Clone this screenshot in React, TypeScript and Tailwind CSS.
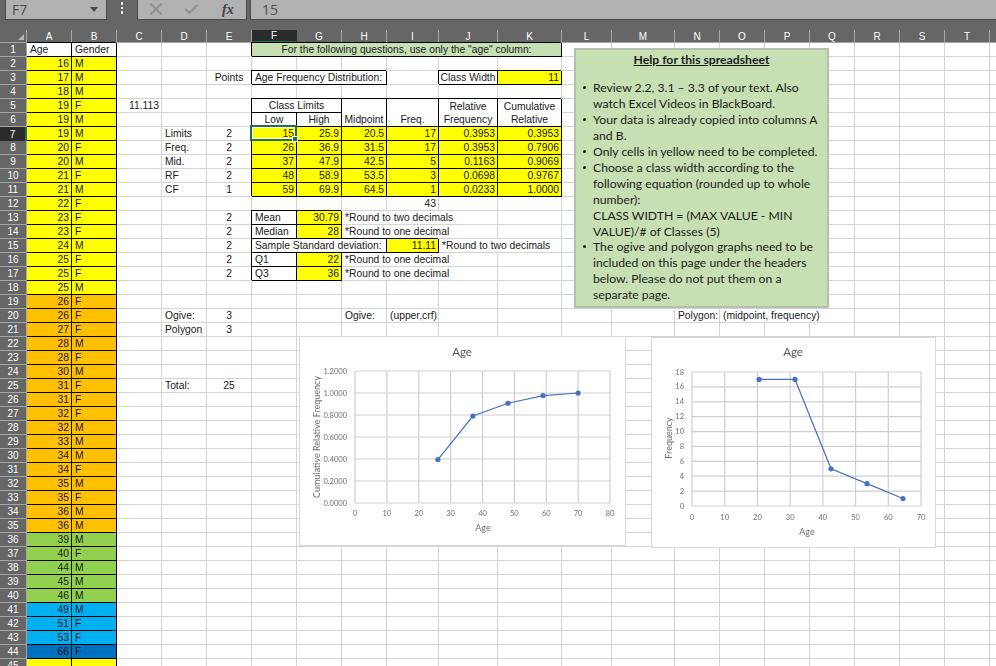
import { Check, X } from "lucide-react";

const COLS = ["A", "B", "C", "D", "E", "F", "G", "H", "I", "J", "K", "L", "M", "N", "O", "P", "Q", "R", "S", "T", "U"];
const ROW_COUNT = 45;

const ages: [number, string][] = [
  [16, "M"], [17, "M"], [18, "M"], [19, "F"], [19, "M"], [19, "M"], [20, "F"], [20, "M"], [21, "F"], [21, "M"],
  [22, "F"], [23, "F"], [23, "F"], [24, "M"], [25, "F"], [25, "F"], [25, "M"], [26, "F"], [26, "F"], [27, "F"],
  [28, "M"], [28, "F"], [30, "M"], [31, "F"], [31, "F"], [32, "F"], [32, "M"], [33, "M"], [34, "M"], [34, "F"],
  [35, "M"], [35, "F"], [36, "M"], [36, "M"], [39, "M"], [40, "F"], [44, "M"], [45, "M"], [46, "M"], [49, "M"],
  [51, "F"], [53, "F"], [66, "F"],
];

type Cell = {
  t?: React.ReactNode;
  align?: "l" | "r" | "c";
  bg?: string;
  box?: boolean;
  cols?: number;
  rows?: number;
  bottom?: boolean;
};

const colSpan: Record<number, string> = { 2: "col-span-2", 3: "col-span-3", 6: "col-span-6" };
const alignCls = { l: "justify-start pl-[3px]", r: "justify-end pr-[2px]", c: "justify-center" };

const YEL = "bg-[#ffff00]";
const cells: Record<string, Cell> = {
  A1: { t: "Age", box: true },
  B1: { t: "Gender", box: true },
  F1: { t: 'For the following questions, use only the "age" column:', cols: 6, align: "c", bg: "bg-[#c6e0b4]", box: true },
  E3: { t: "Points", align: "c" },
  F3: { t: "Age Frequency Distribution:", cols: 3, box: true },
  J3: { t: "Class Width", box: true, align: "c" },
  K3: { t: 11, box: true, align: "r", bg: YEL },
  C5: { t: "11.113", align: "r" },
  F5: { t: "Class Limits", cols: 2, box: true, align: "c" },
  H5: { t: "Midpoint", rows: 2, box: true, align: "c", bottom: true },
  I5: { t: "Freq.", rows: 2, box: true, align: "c", bottom: true },
  J5: { t: <div className="text-center">Relative<br />Frequency</div>, rows: 2, box: true, align: "c" },
  K5: { t: <div className="text-center">Cumulative<br />Relative</div>, rows: 2, box: true, align: "c" },
  F6: { t: "Low", box: true, align: "c" },
  G6: { t: "High", box: true, align: "c" },
  D7: { t: "Limits" }, E7: { t: 2, align: "c" },
  D8: { t: "Freq." }, E8: { t: 2, align: "c" },
  D9: { t: "Mid." }, E9: { t: 2, align: "c" },
  D10: { t: "RF" }, E10: { t: 2, align: "c" },
  D11: { t: "CF" }, E11: { t: 1, align: "c" },
  I12: { t: 43, align: "r" },
  E13: { t: 2, align: "c" },
  F13: { t: "Mean", box: true },
  G13: { t: "30.79", box: true, align: "r", bg: YEL },
  H13: { t: "*Round to two decimals", cols: 3 },
  E14: { t: 2, align: "c" },
  F14: { t: "Median", box: true },
  G14: { t: 28, box: true, align: "r", bg: YEL },
  H14: { t: "*Round to one decimal", cols: 3 },
  E15: { t: 2, align: "c" },
  F15: { t: "Sample Standard deviation:", cols: 3, box: true },
  I15: { t: "11.11", box: true, align: "r", bg: YEL },
  J15: { t: "*Round to two decimals", cols: 2 },
  E16: { t: 2, align: "c" },
  F16: { t: "Q1", box: true },
  G16: { t: 22, box: true, align: "r", bg: YEL },
  H16: { t: "*Round to one decimal", cols: 3 },
  E17: { t: 2, align: "c" },
  F17: { t: "Q3", box: true },
  G17: { t: 36, box: true, align: "r", bg: YEL },
  H17: { t: "*Round to one decimal", cols: 3 },
  D20: { t: "Ogive:" }, E20: { t: 3, align: "c" },
  H20: { t: "Ogive:" },
  I20: { t: "(upper,crf)" },
  N20: { t: "Polygon:" },
  O20: { t: "(midpoint, frequency)", cols: 3 },
  D21: { t: "Polygon" }, E21: { t: 3, align: "c" },
  D25: { t: "Total:" }, E25: { t: 25, align: "c" },
  A45: { box: true, bg: YEL },
  B45: { box: true, bg: YEL },
};

function ageColor(row: number) {
  if (row <= 18) return "bg-[#ffff00]";
  if (row <= 35) return "bg-[#ffc000]";
  if (row <= 40) return "bg-[#92d050]";
  if (row <= 43) return "bg-[#00b0f0]";
  return "bg-[#0070c0]";
}

ages.forEach(([age, sex], i) => {
  const row = i + 2;
  cells[`A${row}`] = { t: age, align: "r", box: true, bg: ageColor(row) };
  cells[`B${row}`] = { t: sex, box: true, bg: ageColor(row) };
});

const tableRows = [
  ["15", "25.9", "20.5", "17", "0.3953", "0.3953"],
  ["26", "36.9", "31.5", "17", "0.3953", "0.7906"],
  ["37", "47.9", "42.5", "5", "0.1163", "0.9069"],
  ["48", "58.9", "53.5", "3", "0.0698", "0.9767"],
  ["59", "69.9", "64.5", "1", "0.0233", "1.0000"],
];
tableRows.forEach((vals, i) => {
  vals.forEach((v, j) => {
    cells[`${"FGHIJK"[j]}${i + 7}`] = { t: v, align: "r", box: true, bg: YEL };
  });
});

function SheetCell({ col, row, cell }: { col: string; row: number; cell?: Cell }) {
  const c = cell ?? {};
  const selected = col === "F" && row === 7;
  return (
    <div
      className={[
        "flex whitespace-nowrap border-r border-b",
        c.bottom ? "items-end" : "items-center",
        c.box ? "border-black" : "border-[#d4d4d4]",
        c.box ? (col === "A" ? "shadow-[0_-1px_0_0_#000]" : "shadow-[-1px_-1px_0_0_#000]") : "",
        c.cols ? colSpan[c.cols] : "",
        c.rows === 2 ? "row-span-2" : "",
        alignCls[c.align ?? "l"],
        c.bg ?? "bg-white",
        selected ? "relative z-10" : "",
      ].join(" ")}
    >
      {c.t}
      {selected && (
        <div className="absolute -left-[2px] -top-[2px] -right-[1px] -bottom-[1px] border-2 border-[#217346]">
          <div className="h-full w-full border border-white" />
          <div className="absolute -right-[3px] -bottom-[3px] h-[6px] w-[6px] border border-white bg-[#217346]" />
        </div>
      )}
    </div>
  );
}

function Sheet() {
  const covered = new Set<string>();
  Object.entries(cells).forEach(([key, c]) => {
    const ci = COLS.indexOf(key[0]);
    const r = Number(key.slice(1));
    for (let x = 0; x < (c.cols ?? 1); x++) {
      for (let y = 0; y < (c.rows ?? 1); y++) {
        if (x || y) covered.add(`${COLS[ci + x]}${r + y}`);
      }
    }
  });

  const rows = Array.from({ length: ROW_COUNT }, (_, i) => i + 1);
  return (
    <div className="grid grid-cols-[27px_repeat(8,45px)_52px_59px_64px_50px_63px_repeat(7,45px)_7px] grid-rows-[13px] auto-rows-[14px] font-['Liberation_Sans',sans-serif] text-[10.3px] leading-[13px] text-[#1a1a1a]">
      <div className="relative border-r border-b border-[#a6a6a6] bg-[#666666]">
        <svg className="absolute left-[18px] top-[4px]" width="7" height="7" viewBox="0 0 7 7">
          <path d="M6 0 L6 6 L0 6 Z" fill="#b5b5b5" />
        </svg>
      </div>
      {COLS.map((c) => (
        <div
          key={c}
          className={[
            "flex items-center justify-center border-r text-[10px] text-white",
            c === "F" ? "border-b-2 border-b-[#217346] border-r-[#2b2b2b] bg-[#2b2b2b]" : "border-b border-[#a6a6a6] bg-[#666666]",
          ].join(" ")}
        >
          {c === "U" ? "" : c}
        </div>
      ))}
      {rows.map((row) => [
        <div
          key={`h${row}`}
          className={[
            "flex items-center justify-center text-[10px] text-white",
            row === 7 ? "border-r-2 border-r-[#217346] bg-[#2b2b2b]" : "border-r border-b border-[#a6a6a6] bg-[#666666]",
          ].join(" ")}
        >
          {row}
        </div>,
        ...COLS.map((col) => {
          const key = `${col}${row}`;
          if (covered.has(key)) return null;
          return <SheetCell key={key} col={col} row={row} cell={cells[key]} />;
        }),
      ])}
    </div>
  );
}

function HelpBox() {
  const items = [
    <>Review 2.2, 3.1 – 3.3 of your text. Also<br />watch Excel Videos in BlackBoard.</>,
    <>Your data is already copied into columns A<br />and B.</>,
    <>Only cells in yellow need to be completed.</>,
    <>Choose a class width according to the<br />following equation (rounded up to whole<br />number):<br />CLASS WIDTH = (MAX VALUE - MIN<br />VALUE)/# of Classes (5)</>,
    <>The ogive and polygon graphs need to be<br />included on this page under the headers<br />below. Please do not put them on a<br />separate page.</>,
  ];
  return (
    <div className="absolute left-[574px] top-[18px] h-[260px] w-[255px] whitespace-nowrap border-2 border-[#b4bfae] bg-[#c6e0b4] pt-[2px] font-['Lato',sans-serif] text-[12.2px] leading-[15.95px] text-[#1c1c1c]">
      <div className="text-center font-bold underline">Help for this spreadsheet</div>
      <ul className="mt-[12px] pl-[7px]">
        {items.map((item, i) => (
          <li key={i} className="flex">
            <span className="mr-[7px] mt-[6px] h-[3px] w-[3px] shrink-0 rounded-full bg-[#1c1c1c]" />
            <span>{item}</span>
          </li>
        ))}
      </ul>
    </div>
  );
}

type ChartProps = {
  className: string;
  plot: [number, number, number, number];
  xMax: number;
  yMax: number;
  yStep: number;
  yDigits: number;
  yTitle: string;
  pts: [number, number][];
  titleX: number;
  titleY: number;
  yLabelX: number;
  xLabelY: number;
  xTitle: [number, number];
  yTitlePos: [number, number];
};

function Chart({ className, plot, xMax, yMax, yStep, yDigits, yTitle, pts, titleX, titleY, yLabelX, xLabelY, xTitle, yTitlePos }: ChartProps) {
  const [x0, y0, x1, y1] = plot;
  const sx = (v: number) => x0 + (v / xMax) * (x1 - x0);
  const sy = (v: number) => y1 - (v / yMax) * (y1 - y0);
  const xTicks = Array.from({ length: xMax / 10 + 1 }, (_, i) => i * 10);
  const yTicks = Array.from({ length: Math.round(yMax / yStep) + 1 }, (_, i) => i * yStep);
  return (
    <div className={`absolute border-[1.5px] border-[#d9d9d9] bg-white ${className}`}>
      <svg className="block h-full w-full blur-[0.3px]" fontFamily="Lato, sans-serif">
        {xTicks.map((t) => (
          <line key={t} x1={sx(t)} x2={sx(t)} y1={y0} y2={y1} stroke="#cfcfcf" strokeWidth="1.2" />
        ))}
        {yTicks.map((t) => (
          <line key={t} x1={x0} x2={x1} y1={sy(t)} y2={sy(t)} stroke="#cfcfcf" strokeWidth="1.2" />
        ))}
        <polyline points={pts.map(([x, y]) => `${sx(x)},${sy(y)}`).join(" ")} fill="none" stroke="#4472c4" strokeWidth="1.2" />
        {pts.map(([x, y]) => (
          <circle key={x} cx={sx(x)} cy={sy(y)} r="2.6" fill="#4472c4" />
        ))}
        {xTicks.map((t) => (
          <text key={t} x={sx(t)} y={xLabelY} textAnchor="middle" fontSize="7.5" fill="#6f6f6f">{t}</text>
        ))}
        {yTicks.map((t) => (
          <text key={t} x={yLabelX} y={sy(t) + 2.6} textAnchor="end" fontSize="7.5" fill="#6f6f6f">{t.toFixed(yDigits)}</text>
        ))}
        <text x={titleX} y={titleY} textAnchor="middle" fontSize="11.5" fill="#595959">Age</text>
        <text x={xTitle[0]} y={xTitle[1]} textAnchor="middle" fontSize="9" fill="#6f6f6f">Age</text>
        <text transform={`translate(${yTitlePos[0]},${yTitlePos[1]}) rotate(-90)`} textAnchor="middle" fontSize="9" fill="#6f6f6f">{yTitle}</text>
      </svg>
    </div>
  );
}

function FormulaBar() {
  return (
    <div className="flex h-[30px] items-start bg-[#666666] font-['Open_Sans',sans-serif] text-[14px] text-[#4f4f4f]">
      <div className="ml-[5px] flex h-[19.5px] w-[102px] items-center justify-between border-x border-b border-[#4a4a4a] bg-[#b1b1b1] pl-[6px] pr-[8px]">
        <span>F7</span>
        <svg width="8" height="5" viewBox="0 0 8 5">
          <path d="M0 0 H8 L4 5 Z" fill="#4a4a4a" />
        </svg>
      </div>
      <div className="flex w-[30px] flex-col items-center gap-[2px] pt-[2px]">
        <div className="h-[2.5px] w-[2.5px] bg-white" />
        <div className="h-[2.5px] w-[2.5px] bg-white" />
        <div className="h-[2.5px] w-[2.5px] bg-white" />
      </div>
      <div className="flex h-[19.5px] w-[110px] items-center overflow-hidden border-x border-b border-[#4a4a4a] bg-[#b1b1b1] pl-[8px]">
        <X className="h-[20px] w-[20px] shrink-0 text-[#919191]" strokeWidth={2.4} />
        <Check className="ml-[17px] h-[17px] w-[17px] shrink-0 text-[#919191]" strokeWidth={3} />
        <span className="ml-[22px] font-['Liberation_Serif',serif] text-[14px] font-bold italic text-[#444]">fx</span>
      </div>
      <div className="ml-[3px] flex h-[19.5px] flex-1 items-center border-l border-b border-[#4a4a4a] bg-[#b1b1b1] pl-[11px]">
        15
      </div>
    </div>
  );
}

export default function App() {
  return (
    <div className="h-[666px] w-[996px] overflow-hidden bg-white">
      <FormulaBar />
      <div className="relative">
        <Sheet />
        <HelpBox />
        <Chart
          className="left-[299px] top-[306px] h-[210px] w-[327px]"
          plot={[55, 34, 310, 166]}
          xMax={80}
          yMax={1.2}
          yStep={0.2}
          yDigits={4}
          yTitle="Cumulative Relative Frequency"
          pts={[[26, 0.3953], [37, 0.7906], [48, 0.9069], [59, 0.9767], [70, 1]]}
          titleX={162}
          titleY={19}
          yLabelX={47}
          xLabelY={179}
          xTitle={[183, 194]}
          yTitlePos={[20, 100]}
        />
        <Chart
          className="left-[651px] top-[307px] h-[211px] w-[285px]"
          plot={[40, 34, 269, 168]}
          xMax={70}
          yMax={18}
          yStep={2}
          yDigits={0}
          yTitle="Frequency"
          pts={[[20.5, 17], [31.5, 17], [42.5, 5], [53.5, 3], [64.5, 1]]}
          titleX={141}
          titleY={18}
          yLabelX={32}
          xLabelY={182}
          xTitle={[155, 197]}
          yTitlePos={[20, 100]}
        />
      </div>
    </div>
  );
}
